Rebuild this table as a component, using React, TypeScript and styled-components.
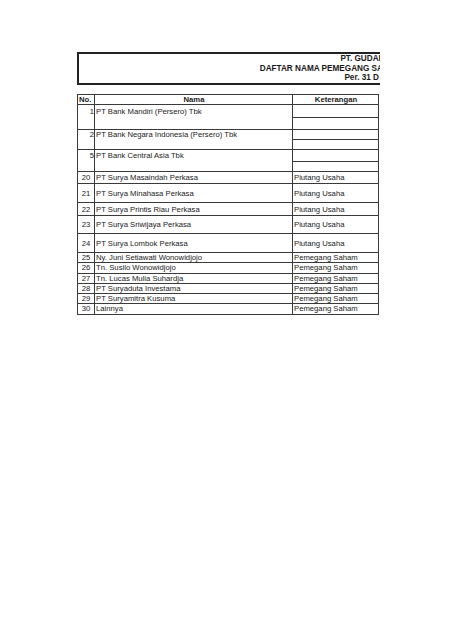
import React from "react";
import styled, { createGlobalStyle } from "styled-components";

const Global = createGlobalStyle`
  html, body { margin: 0; padding: 0; background: #ffffff; }
  body { font-family: "Liberation Sans", Arial, sans-serif; color: #1a1a1a; }
`;

const Page = styled.div`
  width: 474px;
  height: 632px;
  padding: 52px 0 0 77px;
  box-sizing: border-box;
  background: #fff;
`;

const Sheet = styled.div`
  width: 303px;
  overflow: hidden;
  display: flex;
  flex-direction: column;
  gap: 9px;
`;

const TitleBox = styled.div`
  width: 340px;
  height: 29px;
  border: 2px solid #222;
  display: flex;
  flex-direction: column;
`;

const TitleLine = styled.div`
  width: 301px;
  height: 9.7px;
  line-height: 9.7px;
  font-size: 8.2px;
  font-weight: bold;
  white-space: nowrap;
  overflow: hidden;
  display: flex;
  justify-content: flex-end;
`;

const TitleText = styled.span<{ $cut: number }>`
  flex-shrink: 0;
  margin-right: ${(p) => -p.$cut}px;
`;

const Table = styled.table`
  width: 301px;
  border-collapse: collapse;
  table-layout: fixed;
  font-size: 7.7px;
`;

const Row = styled.tr<{ $h: number }>`
  height: ${(p) => p.$h}px;
`;

const Cell = styled.td<{ $align?: string; $top?: number; $bold?: boolean }>`
  border: 1px solid #3a3a3a;
  padding: 0 0 0 1px;
  text-align: ${(p) => p.$align || "left"};
  vertical-align: ${(p) => (p.$top ? "top" : "middle")};
  line-height: ${(p) => (p.$top ? `${p.$top}px` : "9px")};
  font-weight: ${(p) => (p.$bold ? "bold" : "normal")};
  white-space: nowrap;
  overflow: hidden;
`;

const NumCell = styled(Cell)`
  padding: 0;
`;

const split = [
  { no: "1", nama: "PT Bank Mandiri (Persero) Tbk", a: 13, b: 12 },
  { no: "2", nama: "PT Bank Negara Indonesia (Persero) Tbk", a: 10, b: 10 },
  { no: "5", nama: "PT Bank Central Asia Tbk", a: 11.5, b: 10.5 },
];

const rows: { no: string; nama: string; ket: string; h: number }[] = [
  { no: "20", nama: "PT Surya Masaindah Perkasa", ket: "Piutang Usaha", h: 12 },
  { no: "21", nama: "PT Surya Minahasa Perkasa", ket: "Piutang Usaha", h: 19 },
  { no: "22", nama: "PT Surya Printis Riau Perkasa", ket: "Piutang Usaha", h: 13 },
  { no: "23", nama: "PT Surya Sriwijaya Perkasa", ket: "Piutang Usaha", h: 18 },
  { no: "24", nama: "PT Surya Lombok Perkasa", ket: "Piutang Usaha", h: 19 },
  { no: "25", nama: "Ny. Juni Setiawati Wonowidjojo", ket: "Pemegang Saham", h: 10.25 },
  { no: "26", nama: "Tn. Susilo Wonowidjojo", ket: "Pemegang Saham", h: 10.25 },
  { no: "27", nama: "Tn. Lucas Mulia Suhardja", ket: "Pemegang Saham", h: 10.25 },
  { no: "28", nama: "PT Suryaduta Investama", ket: "Pemegang Saham", h: 10.25 },
  { no: "29", nama: "PT Suryamitra Kusuma", ket: "Pemegang Saham", h: 10.25 },
  { no: "30", nama: "Lainnya", ket: "Pemegang Saham", h: 10.25 },
];

export default function App() {
  return (
    <>
      <Global />
      <Page>
        <Sheet>
          <TitleBox>
            <TitleLine>
              <TitleText $cut={4.5}>PT. GUDAN</TitleText>
            </TitleLine>
            <TitleLine>
              <TitleText $cut={3}>DAFTAR NAMA PEMEGANG SA</TitleText>
            </TitleLine>
            <TitleLine>
              <TitleText $cut={-1}>Per. 31 D</TitleText>
            </TitleLine>
          </TitleBox>
          <Table>
            <colgroup>
              <col style={{ width: 17 }} />
              <col style={{ width: 198 }} />
              <col style={{ width: 86 }} />
            </colgroup>
            <tbody>
              <Row $h={10}>
                <Cell $bold>No.</Cell>
                <Cell $bold $align="center">Nama</Cell>
                <Cell $bold $align="center">Keterangan</Cell>
              </Row>
              {split.map((r) => (
                <React.Fragment key={r.no}>
                  <Row $h={r.a}>
                    <NumCell rowSpan={2} $align="right" $top={r.a}>{r.no}</NumCell>
                    <Cell rowSpan={2} $top={r.a}>{r.nama}</Cell>
                    <Cell />
                  </Row>
                  <Row $h={r.b}>
                    <Cell />
                  </Row>
                </React.Fragment>
              ))}
              {rows.map((r) => (
                <Row key={r.no} $h={r.h}>
                  <NumCell $align="center">{r.no}</NumCell>
                  <Cell>{r.nama}</Cell>
                  <Cell>{r.ket}</Cell>
                </Row>
              ))}
            </tbody>
          </Table>
        </Sheet>
      </Page>
    </>
  );
}
